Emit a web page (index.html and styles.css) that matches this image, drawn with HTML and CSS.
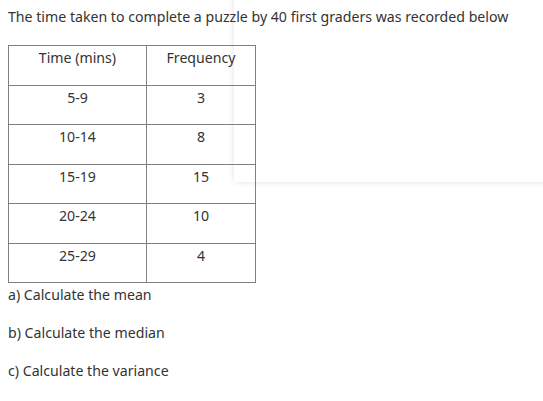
FILE: index.html
```html
<!DOCTYPE html>
<html>
<head>
<meta charset="utf-8">
<link rel="stylesheet" href="styles.css">
</head>
<body>
<div class="panel"></div>
<div class="content">
  <p class="intro">The time taken to complete a puzzle by 40 first graders was recorded below</p>
  <table class="freq">
    <colgroup><col class="c1"><col class="c2"></colgroup>
    <tr><td>Time (mins)</td><td>Frequency</td></tr>
    <tr><td>5-9</td><td>3</td></tr>
    <tr><td>10-14</td><td>8</td></tr>
    <tr><td>15-19</td><td>15</td></tr>
    <tr><td>20-24</td><td>10</td></tr>
    <tr><td>25-29</td><td>4</td></tr>
  </table>
  <p class="q q-first">a) Calculate the mean</p>
  <p class="q">b) Calculate the median</p>
  <p class="q">c) Calculate the variance</p>
</div>
</body>
</html>
```
FILE: styles.css
```css
html, body {
  margin: 0;
  padding: 0;
  background: #fff;
}
body {
  font-family: "Noto Sans", "Open Sans", sans-serif;
  font-size: 14.15px;
  color: #333;
  position: relative;
  width: 543px;
  height: 401px;
  overflow: hidden;
}
.panel {
  position: absolute;
  left: 234px;
  top: -10px;
  width: 330px;
  height: 192px;
  background: #fff;
  box-shadow: 0 0 6px rgba(0,0,0,0.12);
  z-index: 0;
}
.content {
  position: relative;
  z-index: 1;
  padding: 7px 8px 0 8px;
}
.intro {
  margin: 0 0 18px 0;
  line-height: 20px;
}
.freq {
  border-collapse: collapse;
  table-layout: fixed;
  width: 247px;
}
.freq .c1 { width: 138px; }
.freq .c2 { width: 109px; }
.freq td {
  border: 1px solid #808080;
  text-align: center;
  vertical-align: top;
  padding: 2px 4px 16.5px;
  line-height: 20px;
}
.q {
  margin: 0 0 18px 0;
  line-height: 20px;
}
.q-first {
  margin-top: 2px;
}
```
